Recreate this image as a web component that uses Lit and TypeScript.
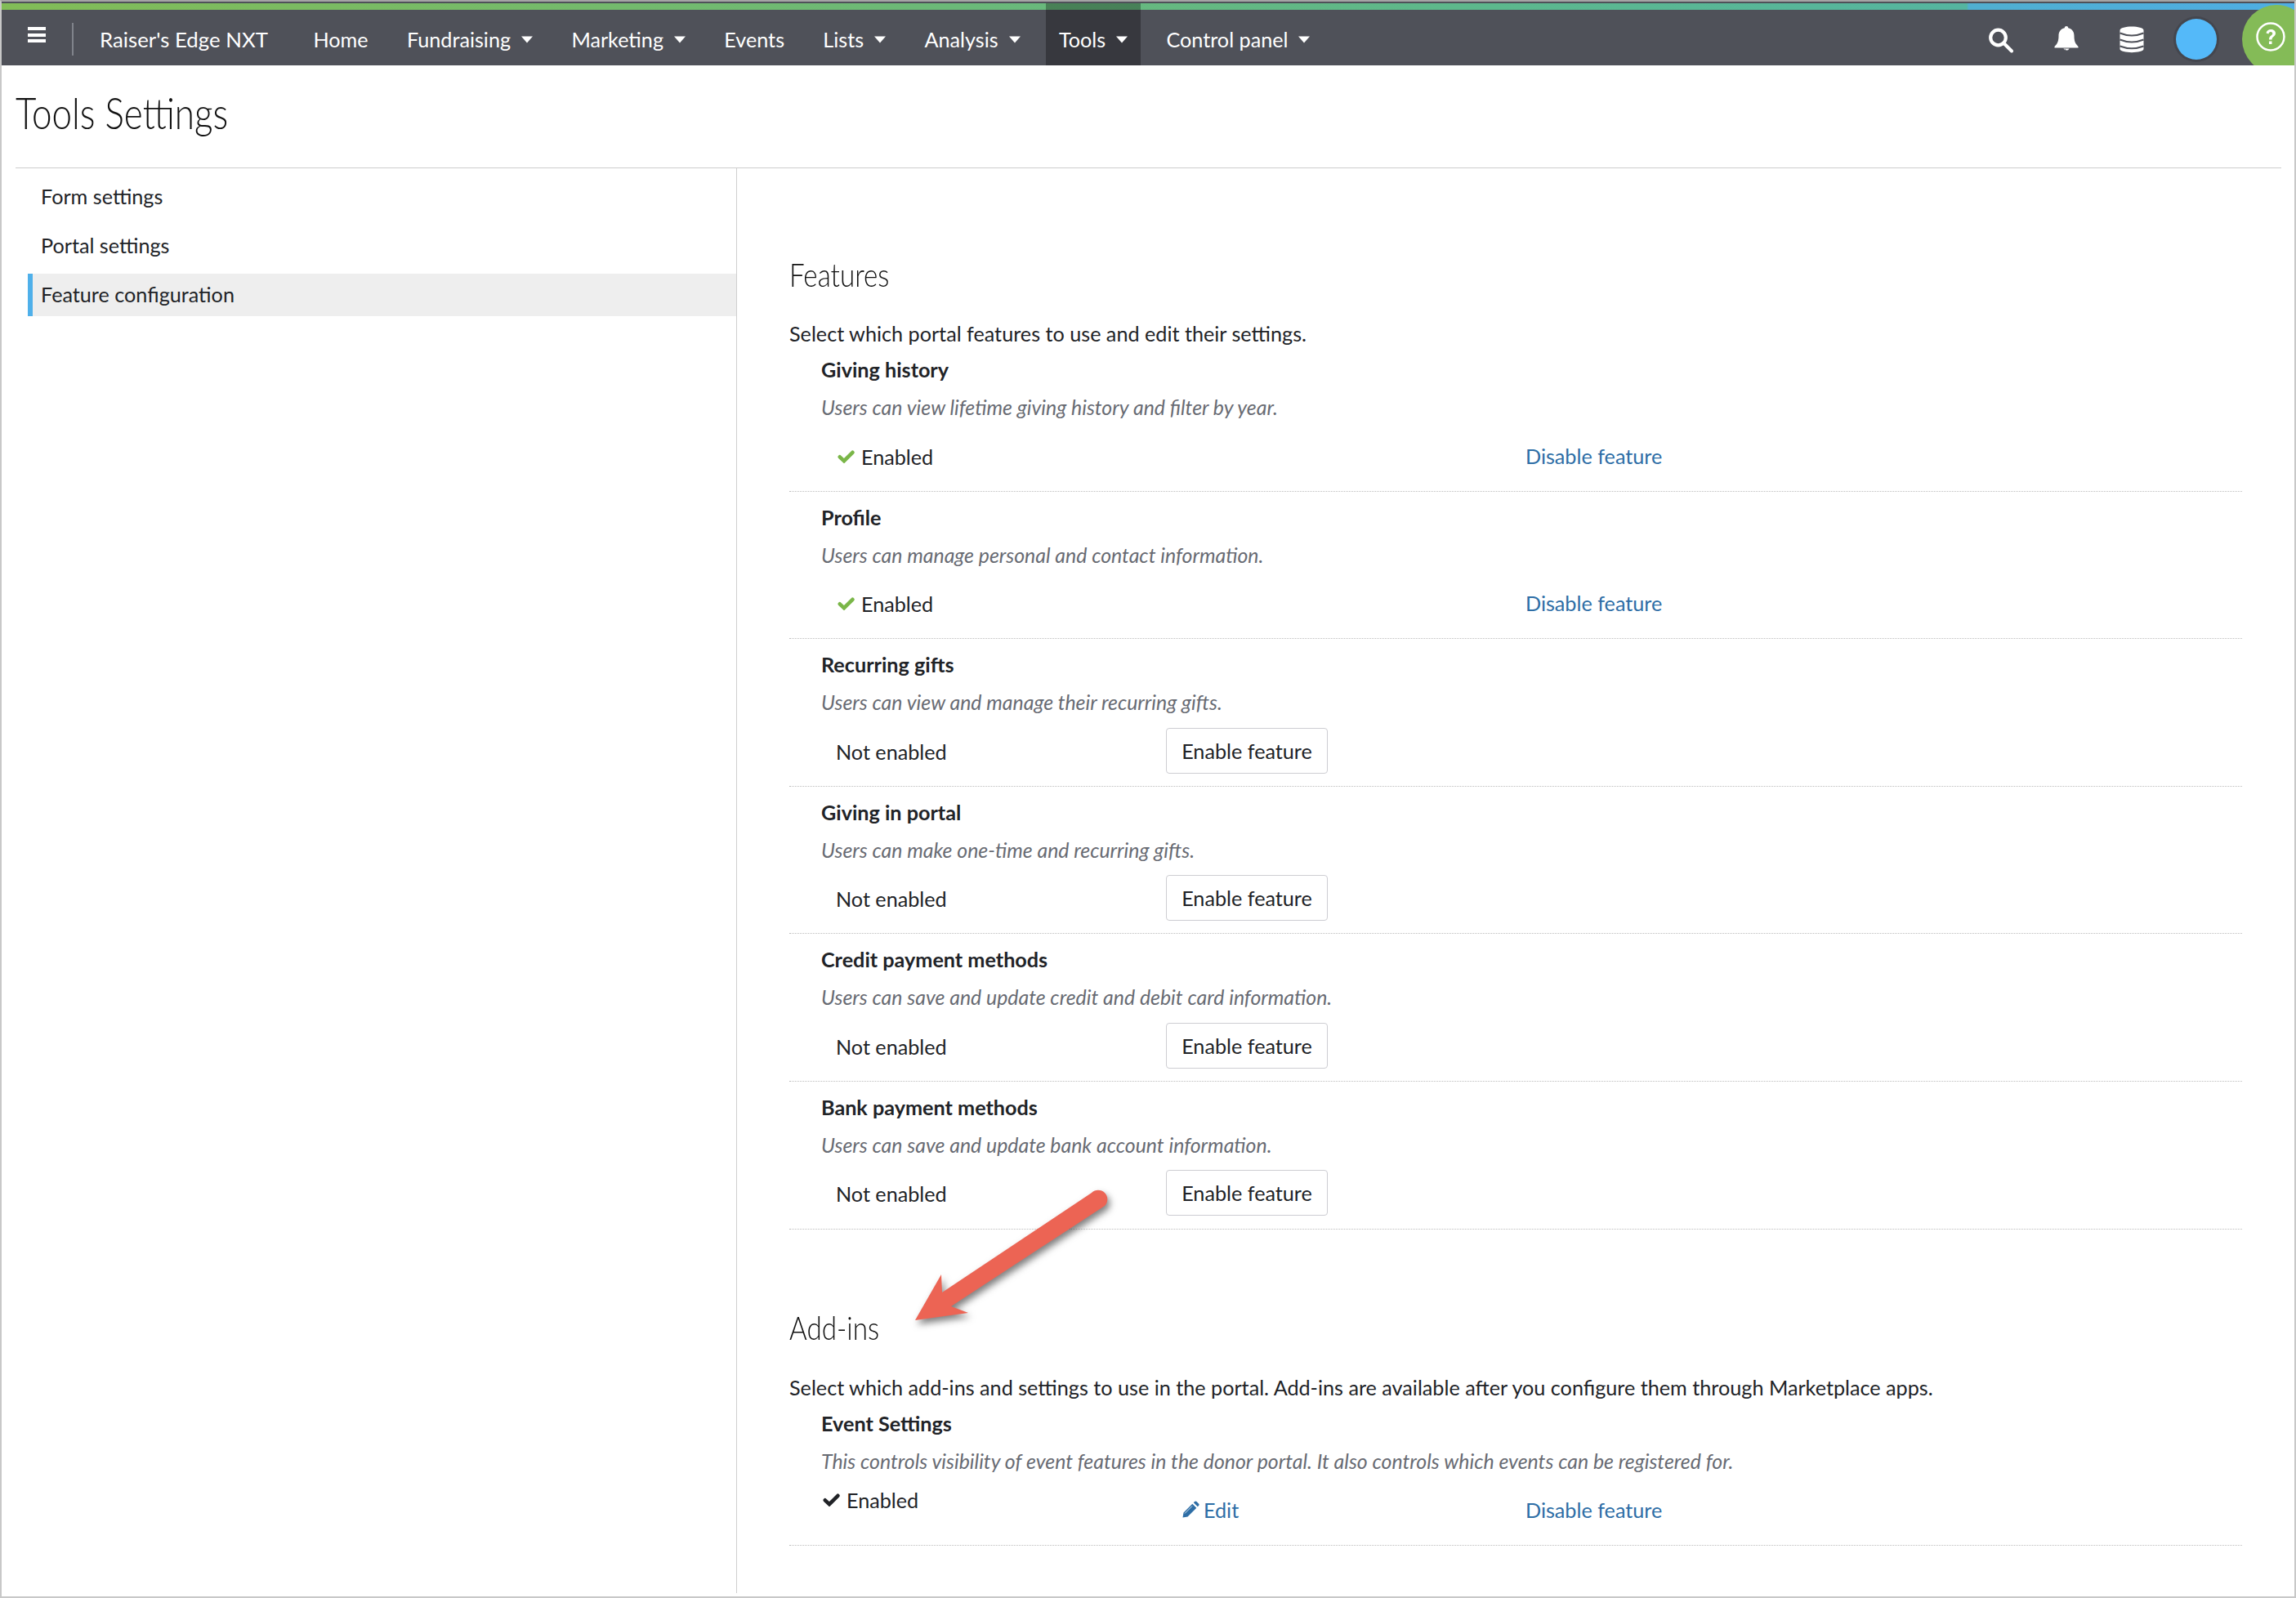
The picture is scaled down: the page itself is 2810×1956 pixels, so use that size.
import { LitElement, html, css } from "lit";
import { customElement } from "lit/decorators.js";

const caret = html`<svg class="caret" viewBox="0 0 14 10"><path d="M0 1.5h14L7 9.500z" fill="#fff"/></svg>`;
const check = (c: string) => html`<svg class="check" viewBox="0 0 21 16"><path d="M2.800 8.300L8 13.200 18.400 2.800" fill="none" stroke=${c} stroke-width="4.600" stroke-linecap="round" stroke-linejoin="miter"/></svg>`;

interface Feature { name: string; desc: string; on: boolean }
const features: Feature[] = [
  { name: "Giving history", desc: "Users can view lifetime giving history and filter by year.", on: true },
  { name: "Profile", desc: "Users can manage personal and contact information.", on: true },
  { name: "Recurring gifts", desc: "Users can view and manage their recurring gifts.", on: false },
  { name: "Giving in portal", desc: "Users can make one-time and recurring gifts.", on: false },
  { name: "Credit payment methods", desc: "Users can save and update credit and debit card information.", on: false },
  { name: "Bank payment methods", desc: "Users can save and update bank account information.", on: false },
];
const navItems: [string, boolean, boolean][] = [
  ["Home", false, false], ["Fundraising", true, false], ["Marketing", true, false], ["Events", false, false],
  ["Lists", true, false], ["Analysis", true, false], ["Tools", true, true], ["Control panel", true, false],
];

@customElement("app-root")
export class AppRoot extends LitElement {
  static styles = css`
    :host { display: block; position: relative; width: 2810px; height: 1956px; box-sizing: border-box;
      border-top: 2px solid #a5a5a5; border-left: 2px solid #c8c8c8; border-right: 2px solid #c8c8c8; border-bottom: 2px solid #c8c8c8;
      background: #fff; color: #212327; font-family: "Lato", sans-serif; font-size: 25.200px; overflow: hidden; }
    .nav { position: relative; height: 78px; box-sizing: border-box; padding-top: 2px; overflow: hidden; background: #4f5159; display: flex; color: #fff; }
    .stripe { position: absolute; left: 0; right: 0; top: 2px; height: 8px;
      background: linear-gradient(90deg, #82bc57 0%, #6cb977 40%, #5cb88d 65%, #55b5a0 85.7%, #50afd0 85.8%, #4eaee4 100%); }
    .burger { width: 86px; display: flex; flex-direction: column; gap: 3.500px; padding: 29px 0 0 32px; box-sizing: border-box; }
    .burger i { display: block; width: 22px; height: 4px; background: #fff; }
    .sep { width: 2px; height: 40px; margin-top: 24px; background: #80838b; }
    .brand { margin-left: 32px; width: 245.500px; line-height: 88px; white-space: nowrap; font-size: 25.800px; }
    .menu { display: flex; gap: 15.300px; }
    .mi { position: relative; padding: 12px 16px 0; display: flex; align-items: center; gap: 13px; white-space: nowrap; height: 76px; box-sizing: border-box; }
    .mi.active { background: rgba(0,0,0,.3); }
    .caret { width: 14px; height: 10px; }
    .tools { margin-left: auto; display: flex; align-items: center; height: 76px; box-sizing: border-box; padding-top: 12px; margin-right: 92px; }
    .ic { width: 30px; height: 34px; margin-right: 50px; }
    .ava { width: 56px; height: 56px; border-radius: 50%; background: #44464e; box-sizing: border-box; padding: 3px; margin-left: -14px; }
    .ava i { display: block; width: 50px; height: 50px; border-radius: 50%; background: #54b9f9; }
    .help { position: absolute; right: -20px; top: 4px; width: 84px; height: 84px; border-radius: 50%; background: #84bb57; }
    .help svg { position: absolute; left: 17px; top: 21px; width: 36px; height: 36px; }
    h1 { margin: 0 16px 0 17px; height: 126px; box-sizing: border-box; line-height: 115px; font-size: 53px; font-weight: 300; color: #111; border-bottom: 1px solid #cdcdcd; }
    h1 span, h2 span { display: inline-block; transform: scaleX(.83); transform-origin: left center; white-space: nowrap; }
    .body { display: flex; height: 1744px; }
    .side { width: 899px; box-sizing: border-box; padding: 8px 0 0 32px; display: flex; flex-direction: column; gap: 8px; }
    .side div { height: 52px; line-height: 52px; padding-left: 16px; box-sizing: border-box; }
    .side .sel { background: #eee; border-left: 6px solid #4fb0ea; padding-left: 10px; margin-top: 1px; line-height: 50px; }
    .main { flex: 1; border-left: 1px solid #cfcfcf; padding: 100px 64px 0 64px; }
    h2 { margin: 0 0 19px; font-size: 40px; line-height: 60px; font-weight: 300; color: #111; }
    h2.add { margin: 90px 0 20px; }
    .intro { height: 45px; line-height: 46px; white-space: nowrap; }
    .item { border-bottom: 1px dotted #bdbdbd; padding-left: 39px; margin-bottom: 9px; height: 171.600px; box-sizing: border-box; }
    .name { height: 46px; line-height: 44px; font-weight: 700; }
    .desc { height: 46px; line-height: 44px; font-style: italic; color: #686b73; font-size: 24.850px; white-space: nowrap; }
    .row { display: grid; grid-template-columns: 404px 440px auto; padding-left: 18px; height: 71px; align-items: center; }
    .st { display: flex; align-items: center; gap: 8px; padding-top: 2px; }
    .check { width: 21px; height: 16px; margin-left: 2px; }
    a { color: #2e6ea6; text-decoration: none; display: inline-flex; align-items: center; gap: 5px; justify-self: start; }
    .btn { width: 198px; height: 56px; box-sizing: border-box; border: 1px solid #cdcdd2; border-radius: 4px; display: flex; align-items: center; justify-content: center; background: #fff; }
    .row.ev { grid-template-columns: 422px 440px auto; padding-left: 0; height: 79px; align-items: start; }
    .row.ev .st { height: 46px; padding-top: 1px; }
    .row.ev a { padding-top: 21px; }
    .row.ev a.edit { margin-left: 20px; }
    .item.ev { height: 172.400px; }
    .pencil { width: 21px; height: 21px; }
    .arrow { position: absolute; left: 1088px; top: 1438px; width: 290px; height: 210px; overflow: visible; filter: drop-shadow(3px 5px 4px rgba(0,0,0,.5)); }
  `;

  render() {
    return html`
      <div class="nav">
        <div class="stripe"></div>
        <div class="burger"><i></i><i></i><i></i></div>
        <div class="sep"></div>
        <div class="brand">Raiser's Edge NXT</div>
        <div class="menu">
          ${navItems.map(([t, c, a]) => html`<div class="mi ${a ? "active" : ""}"><span>${t}</span>${c ? caret : ""}</div>`)}
        </div>
        <div class="tools">
          <svg class="ic" viewBox="0 0 30 34"><circle cx="11.500" cy="15" r="9.300" fill="none" stroke="#fff" stroke-width="4.200"/><path d="M18.500 22l9.500 9.500" stroke="#fff" stroke-width="4" stroke-linecap="round"/></svg>
          <svg class="ic" viewBox="0 0 30 34"><path d="M15 1c1.300 0 2.200.8 2.200 2.200 5 1 7.300 4.800 7.300 9.800 0 7 2 10 5 13v1.500H.5V26c3-3 5-6 5-13 0-5 2.300-8.800 7.300-9.800C12.800 1.800 13.700 1 15 1z" fill="#fff"/><path d="M11.500 28.500a3.800 3.800 0 0 0 7 0z" fill="#fff"/><path d="M13 29a2.600 2.600 0 0 0 3 2.400" fill="none" stroke="#4f5159" stroke-width=".9"/></svg>
          <svg class="ic" viewBox="0 0 30 34"><path d="M.5 6C.5 0 29.500 0 29.500 6v23c0 5.500-29 5.500-29 0z" fill="#fff"/><path d="M.5 9.500Q15 15.500 29.500 9.500M.5 17.500Q15 23.500 29.500 17.500M.5 25.500Q15 31 29.500 25.500" fill="none" stroke="#4f5159" stroke-width="2"/></svg>
          <div class="ava"><i></i></div>
        </div>
        <div class="help"><svg viewBox="0 0 36 36"><circle cx="18" cy="18" r="16.500" fill="none" stroke="#fff" stroke-width="2.500"/><path d="M12.500 13.500c.5-3 2.800-4.500 5.700-4.500 3.300 0 5.800 2 5.800 4.800 0 4-4.500 4-4.500 7.700h-3.500c0-5 4.300-5 4.300-7.500 0-1.200-1-2-2.300-2-1.500 0-2.300 1-2.500 2.500zM16 23.500h3.500V27H16z" fill="#fff"/></svg></div>
      </div>
      <h1><span>Tools Settings</span></h1>
      <div class="body">
        <div class="side">
          <div>Form settings</div><div>Portal settings</div><div class="sel">Feature configuration</div>
        </div>
        <div class="main">
          <h2><span>Features</span></h2>
          <div class="intro">Select which portal features to use and edit their settings.</div>
          ${features.map((f) => html`<div class="item">
            <div class="name">${f.name}</div>
            <div class="desc">${f.desc}</div>
            <div class="row">
              ${f.on
                ? html`<div class="st">${check("#7ab648")}<span>Enabled</span></div><div></div><a>Disable feature</a>`
                : html`<div class="st">Not enabled</div><div class="btn">Enable feature</div>`}
            </div>
          </div>`)}
          <h2 class="add"><span>Add-ins</span></h2>
          <div class="intro">Select which add-ins and settings to use in the portal. Add-ins are available after you configure them through Marketplace apps.</div>
          <div class="item ev">
            <div class="name">Event Settings</div>
            <div class="desc">This controls visibility of event features in the donor portal. It also controls which events can be registered for.</div>
            <div class="row ev">
              <div class="st">${check("#212327")}<span>Enabled</span></div>
              <a class="edit"><svg class="pencil" viewBox="0 0 21 21"><path d="M.5 20.500l1-6L12.300 3.700l5 5L6.500 19.500zM13.800 2.200l1.200-1.200c.8-.8 1.700-.8 2.500 0l2.500 2.500c.8.8.8 1.700 0 2.500l-1.200 1.200z" fill="#2e6ea6"/><path d="M3 15.500l9-9" stroke="#fff" stroke-width=".8"/></svg>Edit</a>
              <a>Disable feature</a>
            </div>
          </div>
        </div>
      </div>
      <svg class="arrow" viewBox="0 0 290 210">
        <path d="M30 176 L62 120 L63 142 L246 20 A11 11 0 0 1 262 36 L74 159 L95 167 Z" fill="#ec6454"/>
      </svg>
    `;
  }
}
